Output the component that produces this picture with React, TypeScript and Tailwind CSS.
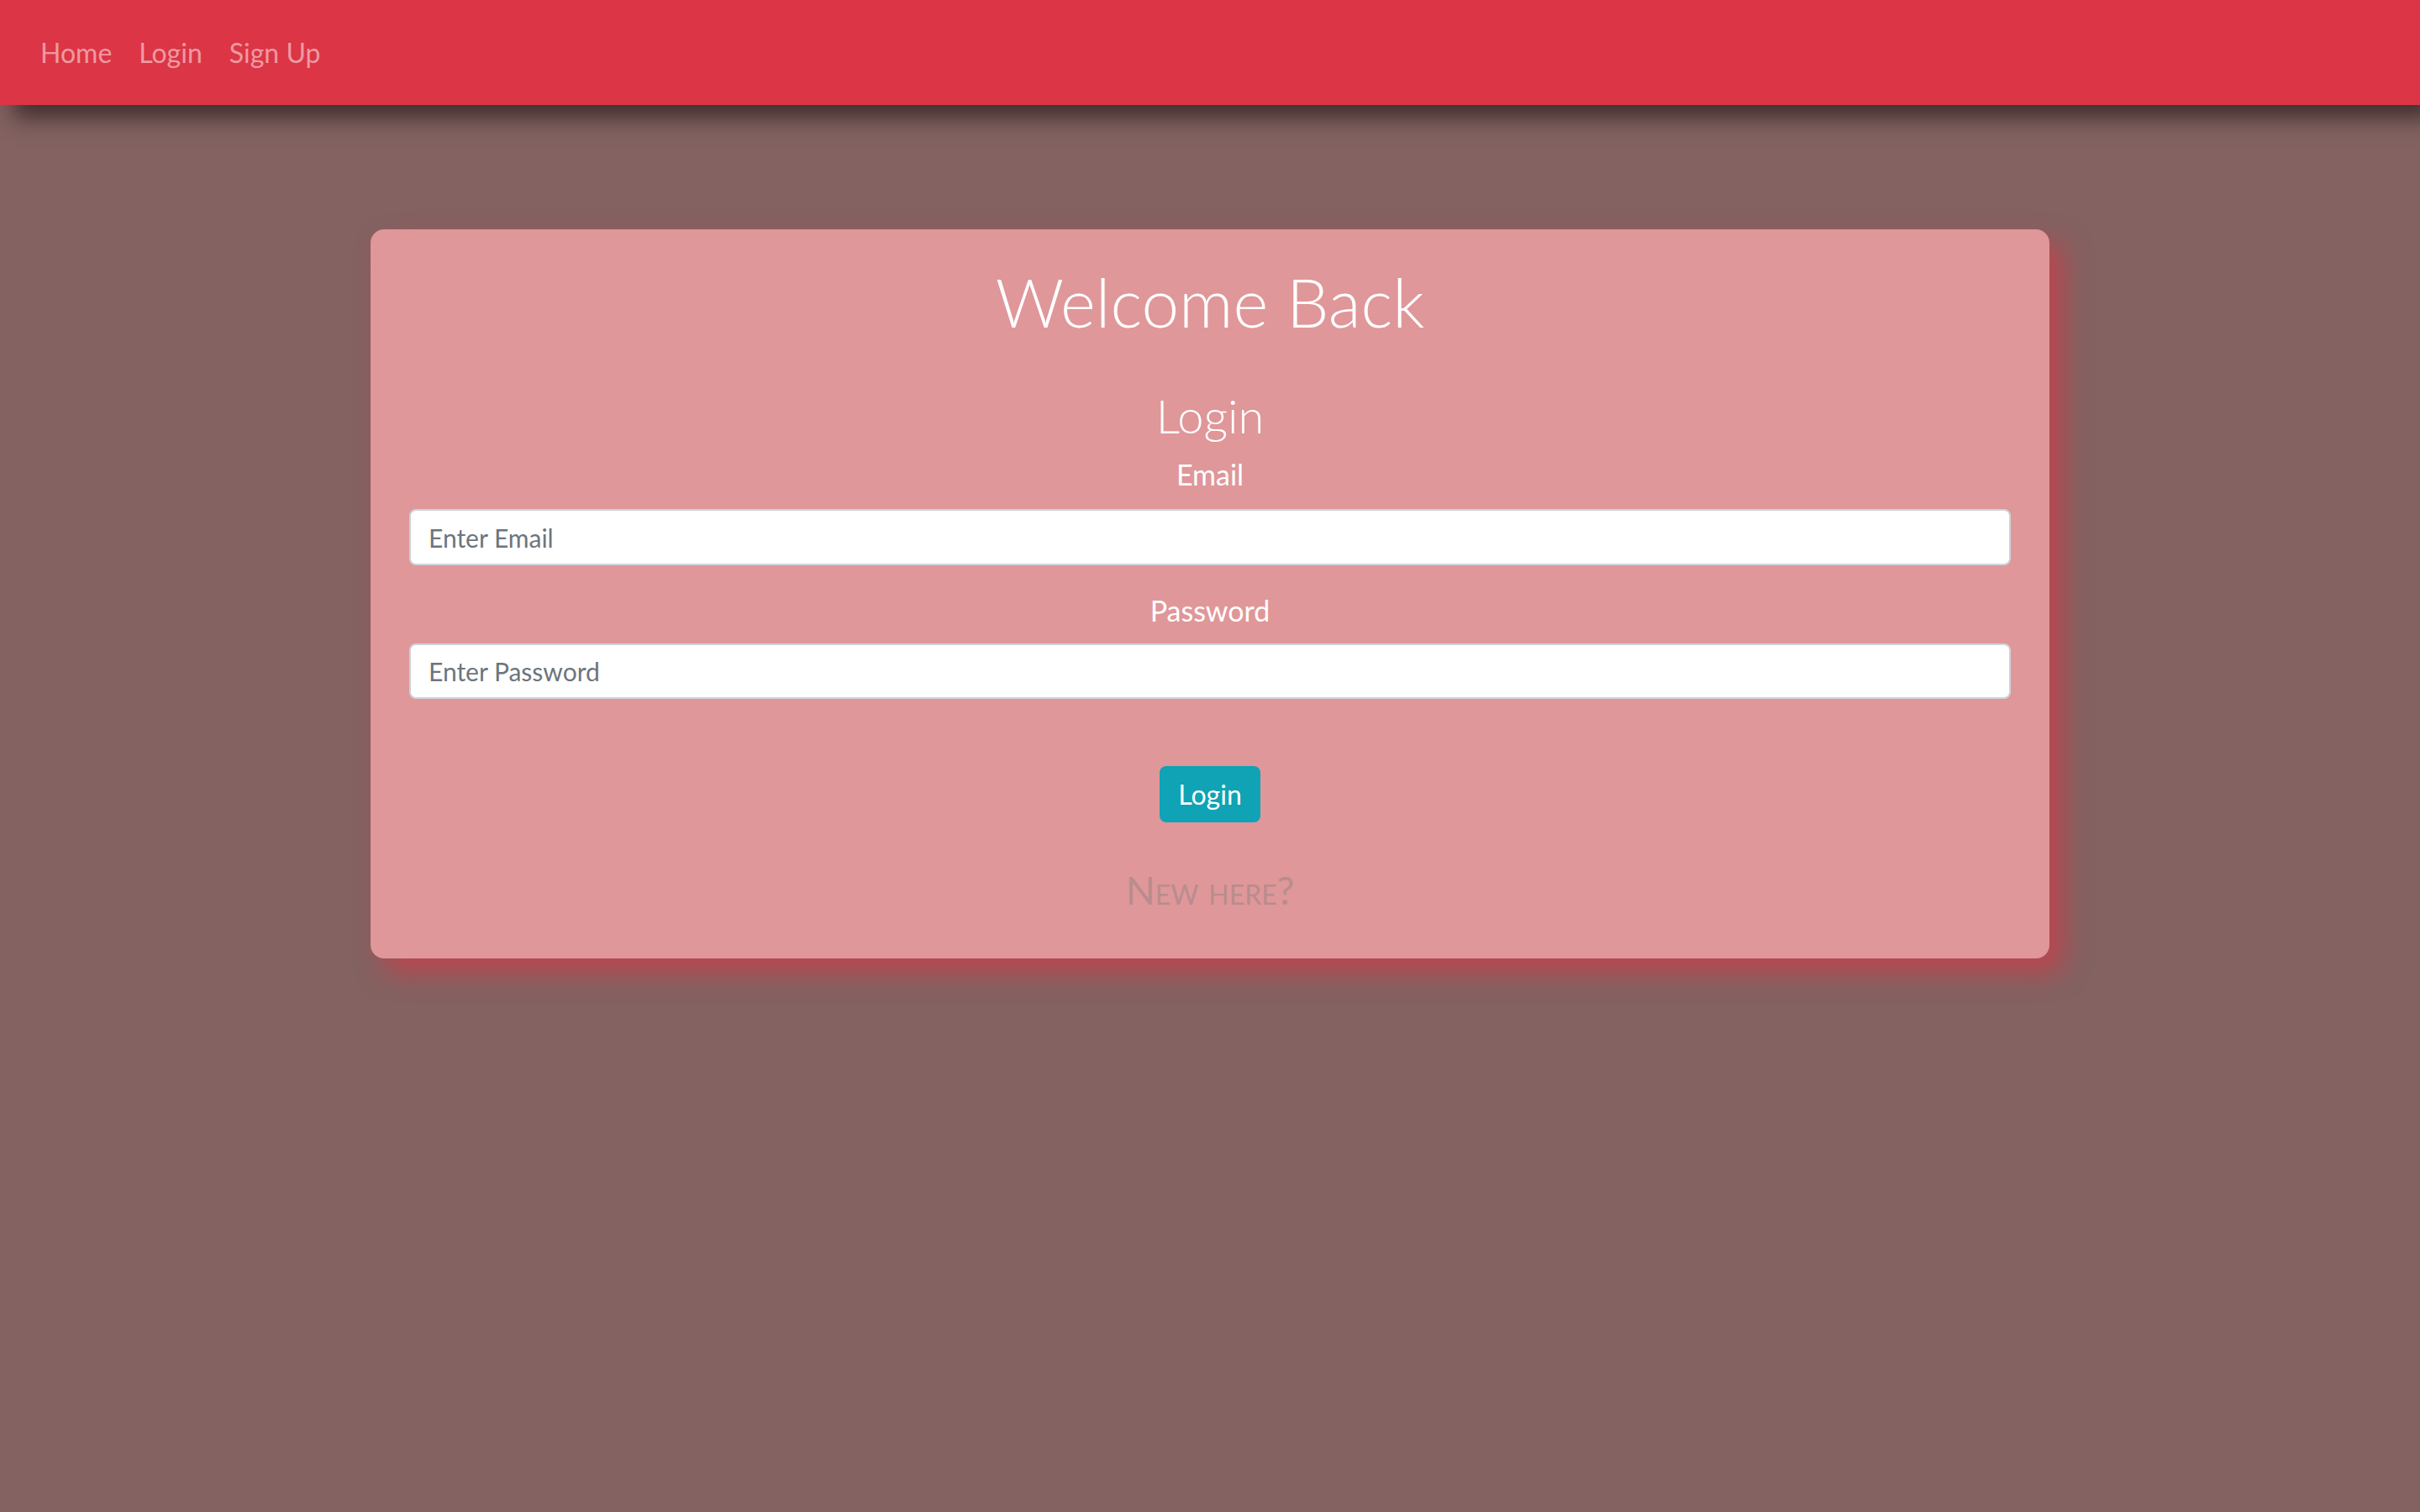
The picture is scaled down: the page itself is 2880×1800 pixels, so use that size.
import { FC } from "react";

const NavBar: FC = () => {
  const links = ["Home", "Login", "Sign Up"];
  return (
    <nav className="relative z-10 flex h-[125px] items-center bg-[#dc3545] px-8 shadow-[16px_16px_24px_rgba(0,0,0,0.5)]">
      {links.map((l) => (
        <a
          key={l}
          href="#"
          className="px-4 text-[32px] leading-[48px] text-[rgba(255,255,255,0.5)] hover:text-[rgba(255,255,255,0.75)]"
        >
          {l}
        </a>
      ))}
    </nav>
  );
};

const LoginCard: FC = () => {
  return (
    <div className="mx-auto mt-[148px] w-[1998px] rounded-[16px] bg-[#df9799] px-[46px] pt-[38px] pb-[49px] text-center shadow-[16px_16px_32px_rgba(220,53,69,0.65)]">
      <h1 className="text-[80px] leading-[96px] font-light text-white">Welcome Back</h1>
      <h2 className="mt-[56px] text-[56px] leading-[64px] font-light text-white">Login</h2>
      <label className="mt-[14px] block text-[34px] leading-[48px] text-white">Email</label>
      <input
        type="email"
        placeholder="Enter Email"
        className="mt-[17px] block h-[67px] w-full rounded-[8px] border-2 border-[#ced4da] bg-white px-[21px] text-[30px] text-[#495057] placeholder:text-[#6c757d] outline-none"
      />
      <label className="mt-[30px] block text-[34px] leading-[48px] text-white">Password</label>
      <input
        type="password"
        placeholder="Enter Password"
        className="mt-[15px] block h-[66px] w-full rounded-[8px] border-2 border-[#ced4da] bg-white px-[21px] text-[30px] text-[#495057] placeholder:text-[#6c757d] outline-none"
      />
      <button className="mt-[80px] h-[67px] w-[120px] rounded-[8px] bg-[#0fa3b5] text-[32px] text-white">
        Login
      </button>
      <h4 className="mt-[49px] text-[46px] leading-[64px] text-[#b98c8e] [font-variant:small-caps]">
        New here?
      </h4>
    </div>
  );
};

export default function App() {
  return (
    <div className="min-h-screen bg-[#836261] font-['Lato','Noto_Sans',sans-serif]">
      <NavBar />
      <LoginCard />
    </div>
  );
}
